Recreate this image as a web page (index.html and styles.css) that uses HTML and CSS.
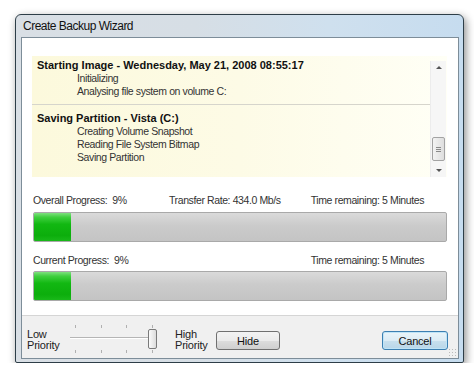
FILE: index.html
```html
<!DOCTYPE html>
<html lang="en">
<head>
    <meta charset="UTF-8">
    <title>Create Backup Wizard</title>
    <link rel="stylesheet" href="styles.css">
</head>
<body>

<div class="window">
    <div class="titlebar">Create Backup Wizard</div>

    <div class="client">
        <!-- Log of backup steps -->
        <div class="log">
            <div class="log-text">
                <div class="entry">
                    <div class="entry-title">Starting Image - Wednesday, May 21, 2008 08:55:17</div>
                    <div class="step">Initializing</div>
                    <div class="step">Analysing file system on volume C:</div>
                </div>
                <div class="entry">
                    <div class="entry-title">Saving Partition - Vista (C:)</div>
                    <div class="step">Creating Volume Snapshot</div>
                    <div class="step">Reading File System Bitmap</div>
                    <div class="step">Saving Partition</div>
                </div>
            </div>
            <div class="scrollbar">
                <div class="arrow up"></div>
                <div class="track"><div class="thumb"><span></span><span></span><span></span></div></div>
                <div class="arrow down"></div>
            </div>
        </div>

        <!-- Progress bars -->
        <div class="progress">
            <div class="labels">
                <span class="label-main">Overall Progress:&nbsp; 9%</span>
                <span class="label-rate">Transfer Rate: 434.0 Mb/s</span>
                <span class="label-time">Time remaining: 5 Minutes</span>
            </div>
            <div class="bar"><div class="fill" style="width: 9%"></div></div>

            <div class="labels second">
                <span class="label-main">Current Progress:&nbsp; 9%</span>
                <span class="label-time">Time remaining: 5 Minutes</span>
            </div>
            <div class="bar"><div class="fill" style="width: 9%"></div></div>
        </div>

        <!-- Priority slider and buttons -->
        <div class="footer">
            <div class="prio">Low<br>Priority</div>
            <div class="slider">
                <div class="tick t1 top"></div><div class="tick t2 top"></div><div class="tick t3 top"></div><div class="tick t4 top"></div>
                <div class="slider-track"></div>
                <div class="tick t1 bottom"></div><div class="tick t2 bottom"></div><div class="tick t3 bottom"></div><div class="tick t4 bottom"></div>
                <div class="slider-thumb"></div>
            </div>
            <div class="prio high">High<br>Priority</div>
            <button class="btn hide-btn">Hide</button>
            <button class="btn cancel-btn">Cancel</button>
            <div class="grip"></div>
        </div>
    </div>
</div>

</body>
</html>
```

FILE: styles.css
```css
/* Vista style wizard window */
body {
    margin: 0;
    background: #fff;
    font-family: 'Liberation Sans', Arial, sans-serif;
    font-size: 10.5px;
    letter-spacing: -0.4px;
    color: #1a1a1a;
}

.window {
    margin: 14px 0 0 15px;
    width: 438px;
    height: 343px;
    padding: 0 4px 4px 5px;
    border: 1px solid #2e3e48;
    border-radius: 6px 6px 2px 2px;
    background: linear-gradient(to right, #d9dfe5 0%, #d6dee5 40%, #cfe0ee 70%, #c6dcef 100%);
    box-shadow: 2px 3px 9px rgba(0, 0, 0, 0.45);
}

.titlebar {
    height: 22px;
    line-height: 23px;
    padding-left: 2px;
    font-size: 12px;
    letter-spacing: -0.5px;
    color: #111;
}

.client {
    height: 320px;
    border: 1px solid #7d8d99;
    background: #fff;
    display: flex;
    flex-direction: column;
}

/* log panel */
.log {
    margin: 18px 0 0 10px;
    width: 415px;
    height: 121px;
    display: flex;
    background: linear-gradient(to right, #fcf9dc 0%, #fdfbe6 50%, #fffff6 100%);
}

.log-text {
    flex: 1;
    padding-top: 3px;
    line-height: 13px;
}

.entry:first-child {
    padding-bottom: 6px;
    border-bottom: 1px solid #d6d5cc;
}

.entry + .entry {
    padding-top: 7px;
}

.entry-title {
    padding-left: 5px;
    font-size: 11px;
    letter-spacing: 0;
    font-weight: bold;
    color: #111;
}

.step {
    padding-left: 45px;
    color: #333;
}

.scrollbar {
    width: 15px;
    margin: 5px 1px 0 0;
    background: #f6f6f6;
    border-left: 1px solid #ececec;
    display: flex;
    flex-direction: column;
}

.arrow {
    height: 14px;
    position: relative;
}

.arrow::after {
    content: "";
    position: absolute;
    left: 5px;
    border-left: 3px solid transparent;
    border-right: 3px solid transparent;
}

.arrow.up::after {
    top: 5px;
    border-bottom: 3px solid #555;
}

.arrow.down::after {
    top: 6px;
    border-top: 3px solid #555;
}

.track {
    flex: 1;
    display: flex;
    flex-direction: column;
    justify-content: flex-end;
    padding-bottom: 2px;
}

.thumb {
    height: 22px;
    margin: 0 1px;
    border: 1px solid #a3a3a3;
    border-radius: 2px;
    background: linear-gradient(to right, #f3f3f3, #dedede);
    display: flex;
    flex-direction: column;
    justify-content: center;
    align-items: center;
    gap: 1px;
}

.thumb span {
    width: 5px;
    height: 1px;
    background: #8a8a8a;
}

/* progress */
.progress {
    margin: 17px 0 0 11px;
    width: 414px;
}

.labels {
    display: flex;
    white-space: nowrap;
    line-height: 13px;
    margin-bottom: 5px;
    color: #333;
    padding-right: 23px;
}

.labels.second {
    margin-top: 12px;
    margin-bottom: 4px;
}

.label-main {
    width: 136px;
}

.label-time {
    margin-left: auto;
}

.bar {
    height: 28px;
    border: 1px solid #a9a9a9;
    border-radius: 2px;
    background: linear-gradient(to bottom, #dadada 0%, #cbcbcb 45%, #c4c4c4 100%);
}

.fill {
    height: 100%;
    border-radius: 1px 0 0 1px;
    background: linear-gradient(to bottom, #7fe07f 0%, #3fcf3f 15%, #12b812 40%, #0cae0c 80%, #19b819 100%);
}

/* footer */
.footer {
    flex: 1;
    margin-top: 14px;
    border-top: 1px solid #d5d5d5;
    background: #f0f0f0;
    display: flex;
    align-items: flex-start;
    padding-left: 5px;
    position: relative;
}

.prio {
    width: 38px;
    margin-top: 13px;
    font-size: 11px;
    letter-spacing: -0.2px;
    line-height: 11px;
    color: #222;
}

.prio.high {
    width: 41px;
    margin-left: 15px;
}

.slider {
    width: 95px;
    height: 32px;
    margin-top: 7px;
    position: relative;
}

.slider-track {
    position: absolute;
    left: 5px;
    top: 14px;
    width: 82px;
    height: 1px;
    background: #b5b5b5;
    border-bottom: 1px solid #fff;
}

.tick {
    position: absolute;
    width: 1px;
    height: 3px;
    background: #b0b0b0;
}

.tick.top { top: 2px; }
.tick.bottom { top: 27px; }
.t1 { left: 10px; }
.t2 { left: 36px; }
.t3 { left: 61px; }
.t4 { left: 87px; }

.slider-thumb {
    position: absolute;
    left: 83px;
    top: 6px;
    width: 7px;
    height: 18px;
    border: 1px solid #7a7a7a;
    border-radius: 2px;
    background: linear-gradient(to right, #fafafa, #dcdcdc);
}

.btn {
    margin-top: 15px;
    height: 19px;
    padding: 0;
    font-family: 'Liberation Sans', Arial, sans-serif;
    font-size: 11px;
    letter-spacing: -0.2px;
    color: #111;
    border-radius: 3px;
    border: 1px solid #707070;
    background: linear-gradient(to bottom, #f3f3f3 0%, #ebebeb 50%, #dddddd 51%, #cfcfcf 100%);
}

.hide-btn {
    width: 64px;
}

.cancel-btn {
    width: 66px;
    margin-left: auto;
    margin-right: 10px;
    border-color: #3c7fb1;
    background: linear-gradient(to bottom, #eaf4f9 0%, #dcecf5 50%, #c8e0ee 51%, #b9d6e8 100%);
    box-shadow: inset 0 0 0 1px #bfe4f7;
}

.grip {
    position: absolute;
    right: 2px;
    bottom: 2px;
    width: 8px;
    height: 8px;
    background: radial-gradient(circle, #bbb 0.8px, transparent 1px) 0 0 / 3px 3px;
}
```
